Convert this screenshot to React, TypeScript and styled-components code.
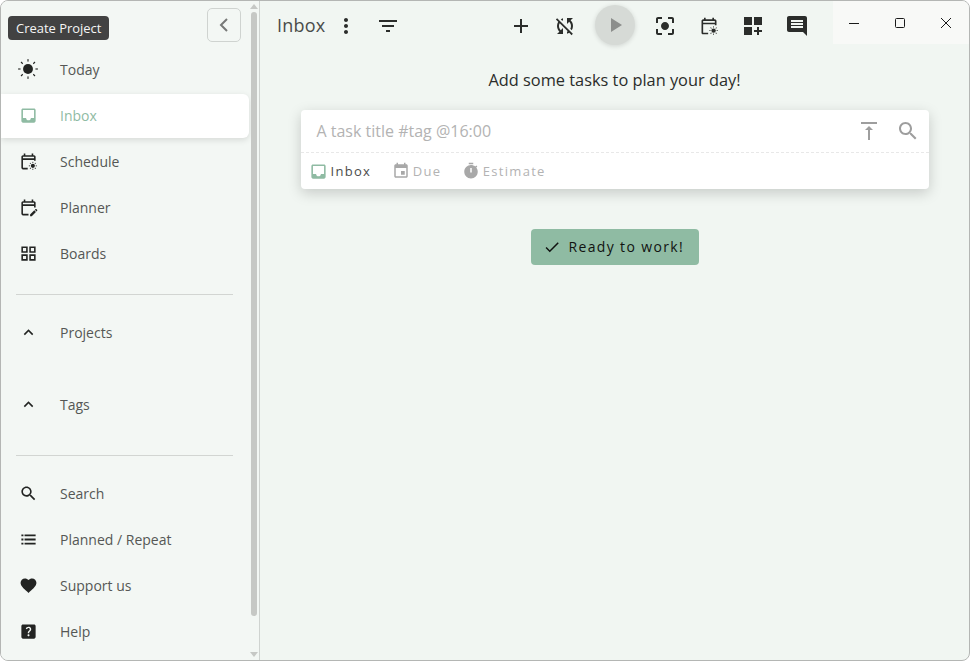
import React from "react";
import styled, { createGlobalStyle } from "styled-components";

const paths = {
  inbox:
    "M19 3H5c-1.1 0-2 .9-2 2v14c0 1.1.9 2 2 2h14c1.1 0 2-.9 2-2V5c0-1.1-.9-2-2-2zm0 12h-4c0 1.66-1.35 3-3 3s-3-1.34-3-3H5V5h14v10z",
  planner:
    "M5 10h14v2h2V6c0-1.1-.9-2-2-2h-1V2h-2v2H8V2H6v2H5c-1.11 0-1.99.9-1.99 2L3 20c0 1.1.89 2 2 2h7v-2H5V10zm0-4h14v2H5V6zm17.84 10.28l-.71.71-2.12-2.12.71-.71c.39-.39 1.02-.39 1.41 0l.71.71c.39.39.39 1.02 0 1.41zm-3.54-.7l2.12 2.12-5.3 5.3H14v-2.12l5.3-5.3z",
  boards:
    "M3 3v8h8V3H3zm6 6H5V5h4v4zm-6 4v8h8v-8H3zm6 6H5v-4h4v4zm4-16v8h8V3h-8zm6 6h-4V5h4v4zm-6 4v8h8v-8h-8zm6 6h-4v-4h4v4z",
  expand: "M12 8l-6 6 1.41 1.41L12 10.83l4.59 4.58L18 14z",
  search:
    "M15.5 14h-.79l-.28-.27C15.41 12.59 16 11.11 16 9.5 16 5.91 13.09 3 9.5 3S3 5.91 3 9.5 5.91 16 9.5 16c1.61 0 3.09-.59 4.23-1.57l.27.28v.79l5 4.99L20.49 19l-4.99-5zm-6 0C7.01 14 5 11.99 5 9.5S7.01 5 9.5 5 14 7.01 14 9.5 11.99 14 9.5 14z",
  list: "M3 5.6h2.6V8H3zm4 0h14V8H7zM3 10.8h2.6v2.4H3zm4 0h14v2.4H7zM3 16h2.6v2.4H3zm4 0h14v2.4H7z",
  heart:
    "M12 21.35l-1.45-1.32C5.4 15.36 2 12.28 2 8.5 2 5.42 4.42 3 7.5 3c1.74 0 3.41.81 4.5 2.09C13.09 3.81 14.76 3 16.5 3 19.58 3 22 5.42 22 8.5c0 3.78-3.4 6.86-8.55 11.54L12 21.35z",
  help: "M19 3H5c-1.1 0-2 .9-2 2v14c0 1.1.9 2 2 2h14c1.1 0 2-.9 2-2V5c0-1.1-.9-2-2-2zm-6.99 15c-.7 0-1.26-.56-1.26-1.26 0-.71.56-1.25 1.26-1.25.71 0 1.25.54 1.25 1.25-.01.69-.54 1.26-1.25 1.26zm3.01-7.4c-.76 1.11-1.48 1.46-1.87 2.17-.16.29-.22.48-.22 1.41h-1.82c0-.49-.08-1.29.31-1.98.49-.87 1.42-1.39 1.96-2.16.57-.81.25-2.33-1.37-2.33-1.06 0-1.58.8-1.8 1.48l-1.65-.7C9.01 7.15 10.22 6 11.99 6c1.48 0 2.49.67 3.01 1.52.44.72.7 2.07.03 3.08z",
  more: "M12 8c1.1 0 2-.9 2-2s-.9-2-2-2-2 .9-2 2 .9 2 2 2zm0 2c-1.1 0-2 .9-2 2s.9 2 2 2 2-.9 2-2-.9-2-2-2zm0 6c-1.1 0-2 .9-2 2s.9 2 2 2 2-.9 2-2-.9-2-2-2z",
  filter: "M10 18h4v-2h-4v2zM3 6v2h18V6H3zm3 7h12v-2H6v2z",
  add: "M19 13h-6v6h-2v-6H5v-2h6V5h2v6h6v2z",
  syncOff:
    "M10 6.35V4.26c-.8.21-1.55.54-2.23.96l1.46 1.46c.25-.12.5-.24.77-.33zm-7.14-.94l2.36 2.36C4.45 8.99 4 10.44 4 12c0 2.21.91 4.2 2.36 5.64L4 20h6v-6l-2.24 2.24C6.68 15.15 6 13.66 6 12c0-1 .25-1.94.68-2.77l8.08 8.08c-.25.13-.5.25-.77.34v2.09c.8-.21 1.55-.54 2.23-.96l2.36 2.36 1.27-1.27L4.14 4.14 2.86 5.41zM20 4h-6v6l2.24-2.24C17.32 8.85 18 10.34 18 12c0 1-.25 1.94-.68 2.77l1.46 1.46C19.55 15.01 20 13.56 20 12c0-2.21-.91-4.2-2.36-5.64L20 4z",
  play: "M8 5v14l11-7z",
  focus:
    "M12 8c-2.21 0-4 1.79-4 4s1.79 4 4 4 4-1.79 4-4-1.79-4-4-4zm-7 7H3v4c0 1.1.9 2 2 2h4v-2H5v-4zM5 5h4V3H5c-1.1 0-2 .9-2 2v4h2V5zm14-2h-4v2h4v4h2V5c0-1.1-.9-2-2-2zm0 16h-4v2h4c1.1 0 2-.9 2-2v-4h-2v4z",
  addBoard: "M3 3h8v8H3zm10 0h8v8h-8zM3 13h8v8H3zm15 0h-2v3h-3v2h3v3h2v-3h3v-2h-3z",
  comment:
    "M21.99 4c0-1.1-.89-2-1.99-2H4c-1.1 0-2 .9-2 2v12c0 1.1.9 2 2 2h14l4 4-.01-18zM18 14H6v-2h12v2zm0-3H6V9h12v2zm0-3H6V6h12v2z",
  top: "M8 11h3v10h2V11h3l-4-4-4 4zM4 3v2h16V3H4z",
  event:
    "M17 12h-5v5h5v-5zM16 1v2H8V1H6v2H5c-1.11 0-1.99.9-1.99 2L3 19c0 1.1.89 2 2 2h14c1.1 0 2-.9 2-2V5c0-1.1-.9-2-2-2h-1V1h-2zm3 18H5V8h14v11z",
  timer:
    "M15 1H9v2h6V1zM19.03 7.39l1.42-1.42c-.43-.51-.9-.99-1.41-1.41l-1.42 1.42C16.07 4.74 14.12 4 12 4c-4.97 0-9 4.03-9 9s4.02 9 9 9 9-4.03 9-9c0-2.12-.74-4.07-1.97-5.61zM13 14h-2V8h2v6z",
  check: "M9 16.17L4.83 12l-1.42 1.41L9 19 21 7l-1.41-1.41z",
  schedule:
    "M5 10h14v1h2V6c0-1.1-.9-2-2-2h-1V2h-2v2H8V2H6v2H5c-1.11 0-1.99.9-1.99 2L3 20c0 1.1.89 2 2 2h6v-2H5V10zm0-4h14v2H5V6z",
};

type IconName = keyof typeof paths;

const GlobalStyle = createGlobalStyle`
  html, body {
    margin: 0;
    padding: 0;
    background: #ffffff;
  }
  body {
    font-family: "Open Sans", "Liberation Sans", sans-serif;
  }
`;

const Window = styled.div`
  box-sizing: border-box;
  width: 970px;
  height: 661px;
  display: flex;
  overflow: hidden;
  border: 1px solid #b4b6b4;
  border-radius: 8px;
  background: #f1f6f2;
`;

const Sidebar = styled.aside`
  position: relative;
  flex: 0 0 259px;
  display: flex;
  box-sizing: border-box;
  border-right: 1px solid #cfd3d0;
  background: #f3f7f4;
`;

const SideContent = styled.div`
  flex: 1;
  min-width: 0;
`;

const SideTop = styled.div`
  height: 45px;
  display: flex;
  justify-content: flex-end;
  align-items: flex-start;
  padding: 7px 8px 0 0;
  box-sizing: border-box;
`;

const CollapseButton = styled.div`
  box-sizing: border-box;
  width: 34px;
  height: 34px;
  display: flex;
  align-items: center;
  justify-content: center;
  border: 1px solid #cfd3d0;
  border-radius: 5px;
`;

const Tooltip = styled.div`
  position: absolute;
  left: 7px;
  top: 15px;
  height: 24px;
  padding: 0 8px;
  display: flex;
  align-items: center;
  border-radius: 4px;
  background: #424242;
  color: #f5f5f5;
  font-size: 12.95px;
`;

const NavRow = styled.div<{ $active?: boolean; $gap?: number }>`
  box-sizing: border-box;
  height: ${(p) => (p.$active ? 44 : 46)}px;
  margin-top: ${(p) => (p.$active ? 2 : 0)}px;
  margin-bottom: ${(p) => p.$gap ?? 0}px;
  padding-bottom: ${(p) => (p.$active ? 2 : 0)}px;
  display: flex;
  align-items: center;
  gap: 20px;
  padding-left: 15px;
  font-size: 14px;
  color: ${(p) => (p.$active ? "#8fbba3" : "#555755")};
  ${(p) =>
    p.$active &&
    `
    background: #ffffff;
    border-radius: 0 6px 6px 0;
    box-shadow: 0 2px 6px rgba(0, 0, 0, 0.12);
  `}
`;

const IconSlot = styled.span<{ $active?: boolean }>`
  width: 24px;
  height: 24px;
  display: flex;
  align-items: center;
  justify-content: center;
  color: ${(p) => (p.$active ? "#8fbba3" : "#222422")};
`;

const Divider = styled.hr<{ $top: number }>`
  border: 0;
  height: 1px;
  margin: ${(p) => p.$top}px 16px 14px 15px;
  background: #d2d5d2;
`;

const ScrollBar = styled.div`
  flex: 0 0 10px;
  display: flex;
  flex-direction: column;
  align-items: center;
  padding-top: 3px;
  box-sizing: border-box;
`;

const ScrollArrow = styled.div<{ $down?: boolean }>`
  width: 0;
  height: 0;
  border-left: 4px solid transparent;
  border-right: 4px solid transparent;
  ${(p) =>
    p.$down
      ? "border-top: 5px solid #c6c8c5; margin-top: 36px;"
      : "border-bottom: 5px solid #c6c8c5;"}
`;

const ScrollThumb = styled.div`
  width: 6px;
  height: 604px;
  margin-top: 3px;
  border-radius: 3px;
  background: #c6c8c5;
`;

const Main = styled.main`
  flex: 1;
  min-width: 0;
  display: flex;
  flex-direction: column;
  align-items: center;
`;

const Header = styled.header`
  align-self: stretch;
  height: 49px;
  display: flex;
  align-items: flex-start;
  padding-left: 17px;
`;

const Title = styled.h1`
  margin: 0;
  width: 47px;
  height: 49px;
  line-height: 49px;
  font-size: 18px;
  font-weight: 400;
  letter-spacing: 0.2px;
  white-space: nowrap;
  color: #4a4c4a;
`;

const HeaderButton = styled.div<{ $width?: number }>`
  width: ${(p) => p.$width ?? 44}px;
  height: 49px;
  display: flex;
  align-items: center;
  justify-content: center;
  color: #2b2d2b;
`;

const Tools = styled.div`
  display: flex;
  margin-left: auto;
  margin-right: 14px;
`;

const PlayButton = styled.div`
  width: 40px;
  height: 40px;
  margin: 4px 8px 0;
  display: flex;
  align-items: center;
  justify-content: center;
  border-radius: 50%;
  background: #d6dad6;
  color: #8c8e8c;
  box-shadow: 0 1px 5px rgba(0, 0, 0, 0.14);
`;

const WindowControls = styled.div`
  width: 136px;
  height: 43px;
  display: flex;
  justify-content: flex-end;
  background: #f8f9f7;
`;

const ControlButton = styled.div`
  flex: 0 0 46px;
  display: flex;
  align-items: center;
  justify-content: center;
`;

const Message = styled.div`
  margin-top: 18px;
  height: 24px;
  line-height: 24px;
  font-size: 16.35px;
  color: #2b2d2b;
`;

const TaskCard = styled.section`
  width: 628px;
  margin-top: 18px;
  border-radius: 4px;
  background: #ffffff;
  box-shadow: 0 4px 14px rgba(0, 0, 0, 0.18);
`;

const TaskInputRow = styled.div`
  height: 42px;
  display: flex;
  align-items: center;
  padding: 0 1px 0 16px;
  border-bottom: 1px dashed #e8e8e8;
`;

const Placeholder = styled.span`
  flex: 1;
  font-size: 16px;
  color: #b3b3b3;
`;

const InputAction = styled.span`
  width: 39px;
  display: flex;
  justify-content: center;
  color: #9e9e9e;
`;

const MetaRow = styled.div`
  height: 36px;
  display: flex;
  align-items: center;
  padding-left: 8px;
  gap: 20.5px;
`;

const MetaItem = styled.div<{ $active?: boolean }>`
  display: flex;
  align-items: center;
  gap: 3px;
  font-size: 13px;
  letter-spacing: 1.3px;
  color: ${(p) => (p.$active ? "#4a4c4a" : "#b3b3b3")};
  svg {
    color: ${(p) => (p.$active ? "#8fbba3" : "#a8a8a8")};
  }
`;

const ReadyButton = styled.div`
  box-sizing: border-box;
  width: 168px;
  height: 36px;
  margin-top: 40px;
  display: flex;
  align-items: center;
  gap: 8px;
  padding: 0 0 1px 12px;
  border-radius: 4px;
  background: #8fbba3;
  color: #111311;
  font-size: 14px;
  letter-spacing: 1.35px;
`;

function Icon({ name, size = 24 }: { name: IconName; size?: number }) {
  return (
    <svg width={size} height={size} viewBox="0 0 24 24" fill="currentColor">
      <path d={paths[name]} />
    </svg>
  );
}

function Sun({ size, cx = 12, cy = 12, r = 5.4 }: any) {
  const rays = [0, 45, 90, 135, 180, 225, 270, 315];
  return (
    <svg width={size} height={size} viewBox="0 0 24 24" fill="currentColor">
      <circle cx={cx} cy={cy} r={r} />
      {rays.map((a) => (
        <rect
          key={a}
          x={cx - 0.6}
          y={cy - r * 2}
          width={1.2}
          height={r * 0.5}
          transform={`rotate(${a} ${cx} ${cy})`}
        />
      ))}
    </svg>
  );
}

function ScheduleIcon({ size }: { size: number }) {
  const rays = [0, 45, 90, 135, 180, 225, 270, 315];
  return (
    <svg width={size} height={size} viewBox="0 0 24 24" fill="currentColor">
      <path d={paths.schedule} />
      <circle cx="17.5" cy="17.5" r="2.6" />
      {rays.map((a) => (
        <rect
          key={a}
          x="17"
          y="12.4"
          width="1"
          height="1.5"
          transform={`rotate(${a} 17.5 17.5)`}
        />
      ))}
    </svg>
  );
}

function Nav({ label, icon, active, gap }: any) {
  return (
    <NavRow $active={active} $gap={gap}>
      <IconSlot $active={active}>{icon}</IconSlot>
      {label}
    </NavRow>
  );
}

export default function App() {
  return (
    <>
      <GlobalStyle />
      <Window>
        <Sidebar>
          <SideContent>
            <SideTop>
              <CollapseButton>
                <svg width="14" height="16" viewBox="0 0 14 16" fill="none" stroke="#777977" strokeWidth="2">
                  <path d="M10 2L4 8l6 6" />
                </svg>
              </CollapseButton>
            </SideTop>
            <Nav label="Today" icon={<Sun size={22} />} />
            <Nav label="Inbox" active icon={<Icon name="inbox" size={19} />} />
            <Nav label="Schedule" icon={<ScheduleIcon size={19} />} />
            <Nav label="Planner" icon={<Icon name="planner" size={19} />} />
            <Nav label="Boards" icon={<Icon name="boards" size={19} />} />
            <Divider $top={18} />
            <Nav label="Projects" gap={26} icon={<Icon name="expand" size={19} />} />
            <Nav label="Tags" gap={28} icon={<Icon name="expand" size={19} />} />
            <Divider $top={0} />
            <Nav label="Search" icon={<Icon name="search" size={19} />} />
            <Nav label="Planned / Repeat" icon={<Icon name="list" size={19} />} />
            <Nav label="Support us" icon={<Icon name="heart" size={19} />} />
            <Nav label="Help" icon={<Icon name="help" size={19} />} />
          </SideContent>
          <ScrollBar>
            <ScrollArrow />
            <ScrollThumb />
            <ScrollArrow $down />
          </ScrollBar>
          <Tooltip>Create Project</Tooltip>
        </Sidebar>
        <Main>
          <Header>
            <Title>Inbox</Title>
            <HeaderButton>
              <Icon name="more" />
            </HeaderButton>
            <HeaderButton $width={40}>
              <Icon name="filter" />
            </HeaderButton>
            <Tools>
              <HeaderButton>
                <Icon name="add" />
              </HeaderButton>
              <HeaderButton>
                <Icon name="syncOff" />
              </HeaderButton>
              <PlayButton>
                <Icon name="play" />
              </PlayButton>
              <HeaderButton>
                <Icon name="focus" />
              </HeaderButton>
              <HeaderButton>
                <ScheduleIcon size={20} />
              </HeaderButton>
              <HeaderButton>
                <Icon name="addBoard" />
              </HeaderButton>
              <HeaderButton>
                <Icon name="comment" />
              </HeaderButton>
            </Tools>
            <WindowControls>
              <ControlButton>
                <svg width="10" height="10" viewBox="0 0 10 10" stroke="#1a1a1a" fill="none">
                  <path d="M0 5.5h10" />
                </svg>
              </ControlButton>
              <ControlButton>
                <svg width="10" height="10" viewBox="0 0 10 10" stroke="#1a1a1a" fill="none">
                  <rect x=".5" y=".5" width="9" height="9" rx="1" />
                </svg>
              </ControlButton>
              <ControlButton>
                <svg width="10" height="10" viewBox="0 0 10 10" stroke="#1a1a1a" fill="none">
                  <path d="M0 0l10 10M10 0L0 10" />
                </svg>
              </ControlButton>
            </WindowControls>
          </Header>
          <Message>Add some tasks to plan your day!</Message>
          <TaskCard>
            <TaskInputRow>
              <Placeholder>A task title #tag @16:00</Placeholder>
              <InputAction>
                <Icon name="top" />
              </InputAction>
              <InputAction>
                <Icon name="search" />
              </InputAction>
            </TaskInputRow>
            <MetaRow>
              <MetaItem $active>
                <Icon name="inbox" size={19} />
                Inbox
              </MetaItem>
              <MetaItem>
                <Icon name="event" size={18} />
                Due
              </MetaItem>
              <MetaItem>
                <Icon name="timer" size={18} />
                Estimate
              </MetaItem>
            </MetaRow>
          </TaskCard>
          <ReadyButton>
            <Icon name="check" size={18} />
            Ready to work!
          </ReadyButton>
        </Main>
      </Window>
    </>
  );
}
